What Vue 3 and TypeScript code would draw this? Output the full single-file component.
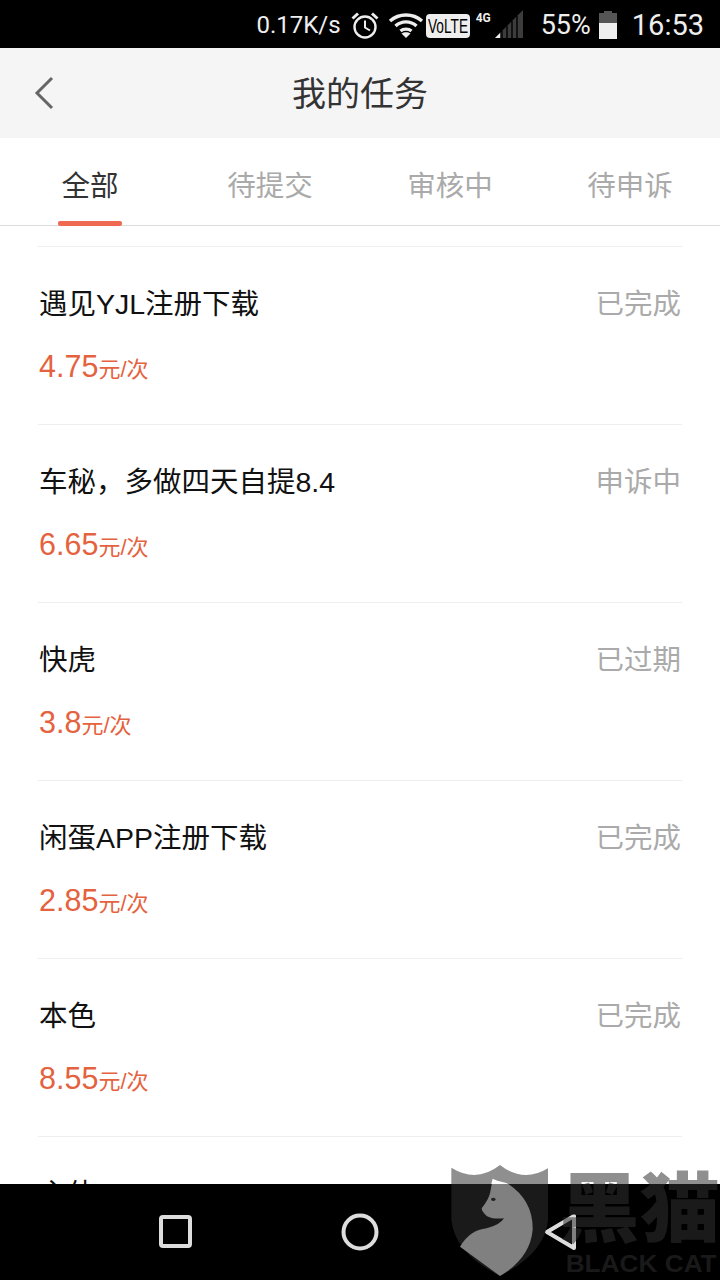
<template>
  <div class="phone">
    <!-- status bar -->
    <div class="status">
      <span class="speed">0.17K/s</span>
      <svg class="ic-alarm" width="30" height="30" viewBox="0 0 30 30" fill="none" stroke="#eee" stroke-width="2.4">
        <circle cx="15" cy="17" r="10.5" />
        <path d="M15 10.5V17.5L20 20.5" stroke-width="2" />
        <path d="M2.5 8.5L8 3.5M27.5 8.5L22 3.5" stroke-width="3" />
      </svg>
      <svg class="ic-wifi" width="36" height="28" viewBox="0 0 36 28" fill="none" stroke="#eee" stroke-width="3.4">
        <path d="M2 10C11 2 25 2 34 10" />
        <path d="M7.5 15C13.5 9.5 22.5 9.5 28.5 15" />
        <path d="M12.5 20C15.5 17.5 20.5 17.5 23.5 20" />
        <path d="M18 27L13.5 22.5C16 20.8 20 20.8 22.5 22.5Z" fill="#eee" stroke="none" />
      </svg>
      <svg class="ic-volte" width="44" height="24" viewBox="0 0 44 24">
        <rect width="44" height="24" rx="4" fill="#eee" />
        <text x="22" y="19" text-anchor="middle" textLength="40" lengthAdjust="spacingAndGlyphs" class="volte-text">VoLTE</text>
      </svg>
      <span class="net">4G</span>
      <svg class="ic-signal" width="28" height="30" viewBox="0 0 28 30">
        <path d="M0 28L28 0V28Z" fill="#3c3c3c" />
        <path d="M0 28L5 23V28Z" fill="#eee" />
        <path d="M7 28V21M12 28V16M17 28V11M22 28V6" stroke="#000" stroke-width="1.4" />
      </svg>
      <span class="pct">55%</span>
      <svg class="ic-batt" width="18" height="28" viewBox="0 0 18 28">
        <path d="M5 0H13V2H18V28H0V2H5Z" fill="#555" />
        <rect y="12" width="18" height="16" fill="#eee" />
      </svg>
      <span class="clock">16:53</span>
    </div>

    <!-- title bar -->
    <div class="header">
      <svg class="back" width="20" height="34" viewBox="0 0 20 34" fill="none" stroke="#666" stroke-width="3">
        <path d="M18 2L3 17L18 32" />
      </svg>
      <span class="title">我的任务</span>
    </div>

    <div class="tabs">
      <div v-for="(t, i) in tabs" :key="t" class="tab" :class="{ on: i === 0 }">{{ t }}</div>
    </div>

    <div class="list">
      <div v-for="r in rows" :key="r.name" class="row">
        <div class="row-top">
          <span class="name">{{ r.name }}</span>
          <span class="state">{{ r.state }}</span>
        </div>
        <div class="price">{{ r.price }}<span class="unit">元/次</span></div>
      </div>
    </div>

    <!-- nav bar -->
    <div class="nav">
      <svg width="720" height="96" viewBox="0 0 720 96" fill="none" stroke="#ddd" stroke-width="4">
        <rect x="161" y="33" width="29" height="29" rx="2" />
        <circle cx="360" cy="48" r="16.5" />
        <path d="M547 48L574 32V64Z" stroke-linejoin="round" />
      </svg>
    </div>

    <!-- watermark lies over everything -->
    <svg class="mark" width="300" height="150" viewBox="0 0 900 450">
      <defs>
        <clipPath id="above"><rect x="0" y="0" width="900" height="162" /></clipPath>
        <clipPath id="below"><rect x="0" y="162" width="900" height="288" /></clipPath>
      </defs>
      <path d="M94 113Q170 160 240 105Q310 160 384 115V270Q375 370 240 438Q105 370 94 270Z" fill="#303030" fill-opacity="0.54" />
      <path id="cat" clip-path="url(#below)" d="M218 146L232 152L262 160Q340 210 338 300Q330 385 240 438L120 350Q150 300 200 295Q240 285 252 265Q215 268 200 258Q185 245 185 235Q205 210 210 190Q215 165 218 146Z" fill="#808080" />
      <path clip-path="url(#above)" d="M218 146L232 152L262 160L262 170H212Z" fill="#fff" />
      <ellipse cx="220" cy="208" rx="7" ry="5" fill="#222" />
      <text x="418" y="318" class="mark-cn" textLength="482" lengthAdjust="spacingAndGlyphs">黑猫</text>
      <text x="437" y="425" class="mark-en" textLength="453" lengthAdjust="spacingAndGlyphs">BLACK CAT</text>
    </svg>
  </div>
</template>

<script setup lang="ts">
const tabs = ['全部', '待提交', '审核中', '待申诉']

const rows = [
  { name: '遇见YJL注册下载', state: '已完成', price: '4.75' },
  { name: '车秘，多做四天自提8.4', state: '申诉中', price: '6.65' },
  { name: '快虎', state: '已过期', price: '3.8' },
  { name: '闲蛋APP注册下载', state: '已完成', price: '2.85' },
  { name: '本色', state: '已完成', price: '8.55' },
  { name: '主体', state: '', price: '' },
]
</script>

<style>
html, body { margin: 0; background: #fff; }
</style>

<style scoped>
.phone { position: relative; width: 720px; height: 1280px; display: flex; flex-direction: column; overflow: hidden; font-family: "Liberation Sans", "Noto Sans CJK SC", sans-serif; background: #fff; }

.status { height: 48px; flex-shrink: 0; background: #000; color: #eee; display: flex; align-items: center; justify-content: flex-end; padding: 1px 16px 0 0; font-family: Roboto, sans-serif; box-sizing: border-box; }
.speed { font-size: 24px; margin-right: 9px; }
.ic-alarm { margin-right: 8px; }
.ic-wifi { margin-right: 2px; }
.ic-volte { margin-top: 3px; }
.volte-text { font-family: "Liberation Sans", sans-serif; font-size: 20px; fill: #000; }
.net { font-size: 12px; font-weight: 700; margin: -14px 3px 0 6px; width: 16px; }
.ic-signal { margin-right: 18px; }
.pct { font-size: 27px; margin-right: 8px; }
.ic-batt { margin-right: 15px; }
.clock { font-size: 29px; }

.header { height: 90px; flex-shrink: 0; background: #f5f5f5; display: flex; align-items: center; justify-content: center; position: relative; padding-bottom: 4px; box-sizing: border-box; }
.back { position: absolute; left: 34px; top: 28px; }
.title { font-size: 34px; color: #333; }

.tabs { height: 88px; flex-shrink: 0; display: grid; grid-template-columns: repeat(4, 180px); border-bottom: 1px solid #ddd; box-sizing: border-box; }
.tab { display: flex; align-items: center; justify-content: center; font-size: 28.5px; color: #aaa; position: relative; padding-top: 4px; box-sizing: border-box; }
.tab.on { color: #333; }
.tab.on::after { content: ""; position: absolute; left: 58px; bottom: -1px; width: 64px; height: 5px; border-radius: 2px; background: #ef6a50; }

.list { flex: 1; min-height: 0; overflow: hidden; padding: 20px 38px 0; }
.row { height: 178px; box-sizing: border-box; border-top: 1px solid #eee; padding-top: 34px; }
.row-top { display: flex; justify-content: space-between; align-items: center; height: 40px; }
.name { font-size: 28.5px; color: #111; margin-left: 1px; }
.state { font-size: 28.5px; color: #aaa; margin-right: 1px; }
.price { margin-top: 25px; height: 40px; line-height: 40px; font-size: 30.5px; color: #e5623e; margin-left: 1px; }
.unit { font-size: 22px; }

.nav { height: 96px; flex-shrink: 0; background: #000; }
.nav svg { display: block; }

.mark { position: absolute; left: 420px; top: 1130px; }
.mark-cn { font-family: "Noto Sans CJK SC", sans-serif; font-weight: 900; font-size: 230px; fill: #303030; fill-opacity: 0.54; }
.mark-en { font-family: "Liberation Sans", sans-serif; font-weight: 700; font-size: 70px; fill: #303030; fill-opacity: 0.54; }
</style>
